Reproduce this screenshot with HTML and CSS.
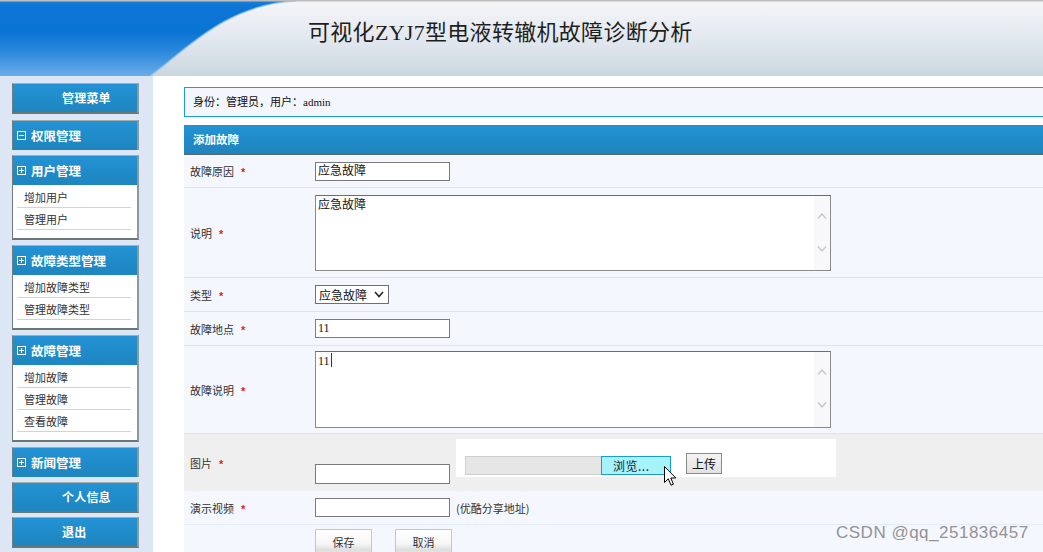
FILE: index.html
```html
<!DOCTYPE html>
<html lang="zh-CN">
<head>
<meta charset="utf-8">
<title>可视化ZYJ7型电液转辙机故障诊断分析</title>
<link rel="stylesheet" href="styles.css">
</head>
<body>
<div class="page">
  <header class="header">
    <svg class="header-bg" width="1043" height="76" viewBox="0 0 1043 76">
      <defs>
        <linearGradient id="gBlue" x1="0" y1="0" x2="0" y2="1">
          <stop offset="0" stop-color="#1a80d8"/>
          <stop offset="0.08" stop-color="#0c75d5"/>
          <stop offset="0.42" stop-color="#0a74d4"/>
          <stop offset="0.68" stop-color="#2b89dc"/>
          <stop offset="1" stop-color="#6cacea"/>
        </linearGradient>
        <linearGradient id="gLight" x1="0" y1="0" x2="0" y2="1">
          <stop offset="0" stop-color="#f5f5f8"/>
          <stop offset="0.5" stop-color="#e3e8ef"/>
          <stop offset="1" stop-color="#cad7df"/>
        </linearGradient>
      </defs>
      <rect x="0" y="0" width="1043" height="76" fill="url(#gBlue)"/>
      <path d="M150,76 C186,50 226,4 296,1 L1043,1 L1043,76 Z" fill="url(#gLight)"/>
      <path d="M150,76 C186,50 226,4 296,1" fill="none" stroke="#8cc2ee" stroke-width="1.5" opacity="0.7"/>
      <rect x="0" y="0" width="1043" height="1.5" fill="#bdbdbd"/>
    </svg>
    <h1 class="title">可视化ZYJ7型电液转辙机故障诊断分析</h1>
  </header>

  <div class="layout">
    <aside class="sidebar">
      <div class="menu-btn first">管理菜单</div>

      <div class="group">
        <div class="group-head">
          <svg class="tog" width="9" height="9" viewBox="0 0 9 9"><rect x="0.5" y="0.5" width="8" height="8" fill="none" stroke="#fff"/><rect x="2" y="4" width="5" height="1" fill="#fff"/></svg>
          权限管理
        </div>
      </div>

      <div class="group">
        <div class="group-head">
          <svg class="tog" width="9" height="9" viewBox="0 0 9 9"><rect x="0.5" y="0.5" width="8" height="8" fill="none" stroke="#fff"/><rect x="2" y="4" width="5" height="1" fill="#fff"/><rect x="4" y="2" width="1" height="5" fill="#fff"/></svg>
          用户管理
        </div>
        <ul class="group-body">
          <li>增加用户</li>
          <li>管理用户</li>
        </ul>
      </div>

      <div class="group">
        <div class="group-head">
          <svg class="tog" width="9" height="9" viewBox="0 0 9 9"><rect x="0.5" y="0.5" width="8" height="8" fill="none" stroke="#fff"/><rect x="2" y="4" width="5" height="1" fill="#fff"/><rect x="4" y="2" width="1" height="5" fill="#fff"/></svg>
          故障类型管理
        </div>
        <ul class="group-body">
          <li>增加故障类型</li>
          <li>管理故障类型</li>
        </ul>
      </div>

      <div class="group">
        <div class="group-head">
          <svg class="tog" width="9" height="9" viewBox="0 0 9 9"><rect x="0.5" y="0.5" width="8" height="8" fill="none" stroke="#fff"/><rect x="2" y="4" width="5" height="1" fill="#fff"/><rect x="4" y="2" width="1" height="5" fill="#fff"/></svg>
          故障管理
        </div>
        <ul class="group-body">
          <li>增加故障</li>
          <li>管理故障</li>
          <li>查看故障</li>
        </ul>
      </div>

      <div class="group">
        <div class="group-head">
          <svg class="tog" width="9" height="9" viewBox="0 0 9 9"><rect x="0.5" y="0.5" width="8" height="8" fill="none" stroke="#fff"/><rect x="2" y="4" width="5" height="1" fill="#fff"/><rect x="4" y="2" width="1" height="5" fill="#fff"/></svg>
          新闻管理
        </div>
      </div>

      <div class="menu-btn">个人信息</div>
      <div class="menu-btn">退出</div>
    </aside>

    <main class="main">
      <div class="info">身份：管理员，用户：admin</div>

      <div class="form">
        <div class="form-head">添加故障</div>

        <div class="row r1">
          <div class="label">故障原因<span class="req">*</span></div>
          <div class="field"><div class="input">应急故障</div></div>
        </div>

        <div class="row r2">
          <div class="label">说明<span class="req">*</span></div>
          <div class="field">
            <div class="textarea">
              <div class="ta-text">应急故障</div>
              <div class="ta-bar">
                <svg width="10" height="6" viewBox="0 0 10 6"><path d="M1,5.5 L5,1 L9,5.5" fill="none" stroke="#c4c4c4" stroke-width="1.2"/></svg>
                <svg width="10" height="6" viewBox="0 0 10 6"><path d="M1,0.5 L5,5 L9,0.5" fill="none" stroke="#c4c4c4" stroke-width="1.2"/></svg>
              </div>
            </div>
          </div>
        </div>

        <div class="row r3">
          <div class="label">类型<span class="req">*</span></div>
          <div class="field">
            <div class="select">
              <span>应急故障</span>
              <svg width="10" height="7" viewBox="0 0 10 7"><path d="M1,1 L5,5.5 L9,1" fill="none" stroke="#222" stroke-width="1.5"/></svg>
            </div>
          </div>
        </div>

        <div class="row r4">
          <div class="label">故障地点<span class="req">*</span></div>
          <div class="field"><div class="input">11</div></div>
        </div>

        <div class="row r5">
          <div class="label">故障说明<span class="req">*</span></div>
          <div class="field">
            <div class="textarea tall">
              <div class="ta-text">11<span class="caret"></span></div>
              <div class="ta-bar">
                <svg width="10" height="6" viewBox="0 0 10 6"><path d="M1,5.5 L5,1 L9,5.5" fill="none" stroke="#c4c4c4" stroke-width="1.2"/></svg>
                <svg width="10" height="6" viewBox="0 0 10 6"><path d="M1,0.5 L5,5 L9,0.5" fill="none" stroke="#c4c4c4" stroke-width="1.2"/></svg>
              </div>
            </div>
          </div>
        </div>

        <div class="row r6">
          <div class="label">图片<span class="req">*</span></div>
          <div class="field file-field">
            <div class="input pic-input"></div>
            <div class="upload-box">
              <div class="file-path"></div>
              <div class="browse">浏览...</div>
              <div class="upload-btn">上传</div>
            </div>
          </div>
        </div>

        <div class="row r7">
          <div class="label">演示视频<span class="req">*</span></div>
          <div class="field">
            <div class="input"></div>
            <span class="hint">(优酷分享地址)</span>
          </div>
        </div>

        <div class="row r8">
          <div class="label"></div>
          <div class="field buttons">
            <div class="btn">保存</div>
            <div class="btn">取消</div>
          </div>
        </div>
      </div>
    </main>
  </div>

  <svg class="cursor" width="13" height="21" viewBox="0 0 13 21">
    <path d="M0.5,0.5 L0.5,16.5 L4.3,12.8 L7,19.2 L9.4,18.2 L6.8,12 L11.8,12 Z" fill="#fff" stroke="#000" stroke-width="1"/>
  </svg>
  <div class="watermark">CSDN @qq_251836457</div>
</div>
</body>
</html>
```

FILE: styles.css
```css
* { box-sizing: border-box; }

html, body {
  margin: 0;
  padding: 0;
  background: #fff;
}

body {
  font-family: "Noto Sans CJK SC", "Liberation Sans", sans-serif;
  color: #333;
  overflow: hidden;
}

.page {
  position: relative;
  width: 1043px;
  height: 552px;
  overflow: hidden;
}

/* Header */
.header {
  position: relative;
  height: 76px;
  display: flex;
  align-items: flex-start;
}

.header-bg {
  position: absolute;
  left: 0;
  top: 0;
}

.title {
  position: relative;
  margin: 0;
  padding: 18px 0 0 308px;
  font-family: "Liberation Serif", "Noto Sans CJK SC", serif;
  font-weight: normal;
  font-size: 22px;
  line-height: 30px;
  color: #1e1e1e;
  letter-spacing: 0.3px;
}

/* Layout */
.layout {
  display: flex;
  height: 476px;
}

.sidebar {
  flex: none;
  width: 153px;
  background: #dde6f5;
  padding: 7px 0 0 12px;
}

.menu-btn,
.group-head {
  width: 127px;
  height: 31px;
  border: 1px solid #6f7d7d;
  border-top-color: #a6aeae;
  border-right: 2px solid #8c9a9a;
  border-bottom: 2px solid #6b7777;
  background: linear-gradient(#2392d4, #1e85bf);
  color: #fff;
  font-weight: bold;
  font-size: 12px;
  line-height: 28px;
}

.menu-btn {
  padding-left: 49px;
  margin-bottom: 4px;
  letter-spacing: 0.2px;
}

.menu-btn.first {
  margin-bottom: 6px;
}

.group {
  width: 127px;
  margin-bottom: 5px;
}

.group-head {
  display: flex;
  align-items: center;
  padding-left: 4px;
  height: 30px;
  border-bottom: 0;
  font-size: 12.5px;
}

.group-head .tog {
  flex: none;
  margin-right: 5px;
}

.group-body {
  list-style: none;
  margin: 0;
  padding: 1px 6px 8px 4px;
  background: #fff;
  border: 1px solid #6f7d7d;
  border-top: 0;
  border-right: 2px solid #8c9a9a;
  border-bottom: 2px solid #6b7777;
}

.group-body li {
  height: 22px;
  line-height: 22px;
  padding-left: 7px;
  border-bottom: 1px solid #b9dbf2;
  font-size: 11px;
  color: #333;
}

/* Main */
.main {
  flex: none;
  width: 900px;
  padding: 11px 0 0 31px;
  background: #fff;
}

.info {
  height: 30px;
  border: 1px solid #19a0d6;
  background: #f4f6fe;
  padding-left: 8px;
  font-family: "Liberation Serif", "Noto Sans CJK SC", serif;
  font-size: 11px;
  line-height: 28px;
  color: #111;
  margin-bottom: 8px;
}

.form-head {
  height: 30px;
  background: linear-gradient(#2392d4, #1e84bd);
  border-bottom: 1px solid #59676d;
  color: #fff;
  font-weight: bold;
  font-size: 11.5px;
  line-height: 29px;
  padding-left: 9px;
}

.row {
  display: grid;
  grid-template-columns: 131px 1fr;
  align-items: center;
  background: #f5f7fe;
  border-bottom: 1px solid #d6e6f6;
}

.r1 { height: 33px; }
.r2 { height: 90px; }
.r3 { height: 34px; }
.r4 { height: 34px; }
.r5 { height: 88px; }
.r6 { height: 57px; background: #efefef; border-bottom-color: #efefef; }
.r7 { height: 34px; border-bottom-color: #e2ecf8; }
.r8 { height: 40px; align-items: start; }

.label {
  padding-left: 6px;
  font-size: 11px;
  color: #333;
}

.req {
  color: #e21b1b;
  margin-left: 7px;
  font-family: "Liberation Sans", sans-serif;
  font-weight: bold;
  font-size: 11px;
}

.field {
  display: flex;
  align-items: center;
}

.input {
  width: 135px;
  height: 19px;
  border: 1px solid #7b7b7b;
  background: #fff;
  font-family: "Liberation Serif", "Noto Sans CJK SC", serif;
  font-size: 12px;
  line-height: 17px;
  padding-left: 2px;
  color: #111;
}

.textarea {
  display: flex;
  width: 516px;
  height: 76px;
  border: 1px solid #8a8a8a;
  border-top-color: #6d6d6d;
  background: #fff;
}

.textarea.tall { height: 77px; }

.ta-text {
  flex: 1;
  padding: 1px 2px;
  font-family: "Liberation Serif", "Noto Sans CJK SC", serif;
  font-size: 12px;
  line-height: 16px;
  color: #111;
}

.caret {
  display: inline-block;
  width: 1px;
  height: 14px;
  background: #333;
  vertical-align: -2px;
  margin-left: 1px;
}

.ta-bar {
  flex: none;
  width: 16px;
  background: #f8f8fb;
  display: flex;
  flex-direction: column;
  align-items: center;
  gap: 27px;
  padding-top: 17px;
}

.select {
  display: flex;
  align-items: center;
  justify-content: space-between;
  width: 74px;
  height: 19px;
  border: 1px solid #707070;
  background: #fff;
  padding: 0 4px 0 3px;
  font-size: 12px;
  line-height: 17px;
  color: #111;
}

.file-field {
  align-items: flex-start;
  height: 57px;
}

.pic-input {
  margin-top: 30px;
  height: 20px;
}

.upload-box {
  display: flex;
  align-items: flex-start;
  width: 380px;
  height: 38px;
  margin: 5px 0 0 6px;
  background: #fff;
  padding: 14px 0 0 9px;
}

.file-path {
  width: 136px;
  height: 19px;
  margin-top: 3px;
  background: #e6e6e6;
  border: 1px solid #cfcfcf;
  border-right: 0;
}

.browse {
  width: 70px;
  height: 19px;
  margin-top: 3px;
  background: #a6f3fb;
  border: 1px solid #1c9ad6;
  font-size: 12px;
  line-height: 17px;
  padding-left: 11px;
  color: #222;
  letter-spacing: 0.5px;
}

.upload-btn {
  width: 36px;
  height: 21px;
  margin-left: 15px;
  background: linear-gradient(#f4f4f4, #e2e2e2);
  border: 1px solid #8a8a8a;
  font-size: 12px;
  line-height: 19px;
  text-align: center;
  color: #111;
}

.hint {
  margin-left: 6px;
  font-size: 11px;
  color: #333;
}

.buttons {
  align-items: flex-start;
  padding-top: 4px;
  gap: 23px;
}

.btn {
  width: 57px;
  height: 27px;
  border: 1px solid #c6c6c6;
  background: linear-gradient(#ffffff 0%, #f6f6f6 55%, #dedede 80%, #ececec 100%);
  font-size: 11px;
  line-height: 24px;
  text-align: center;
  color: #333;
}

/* Overlays */
.cursor {
  position: absolute;
  left: 664px;
  top: 466px;
}

.watermark {
  position: absolute;
  left: 836px;
  top: 523px;
  font-family: "Liberation Sans", Arial, sans-serif;
  font-size: 17px;
  letter-spacing: 0.5px;
  line-height: 20px;
  color: #939393;
}
```
